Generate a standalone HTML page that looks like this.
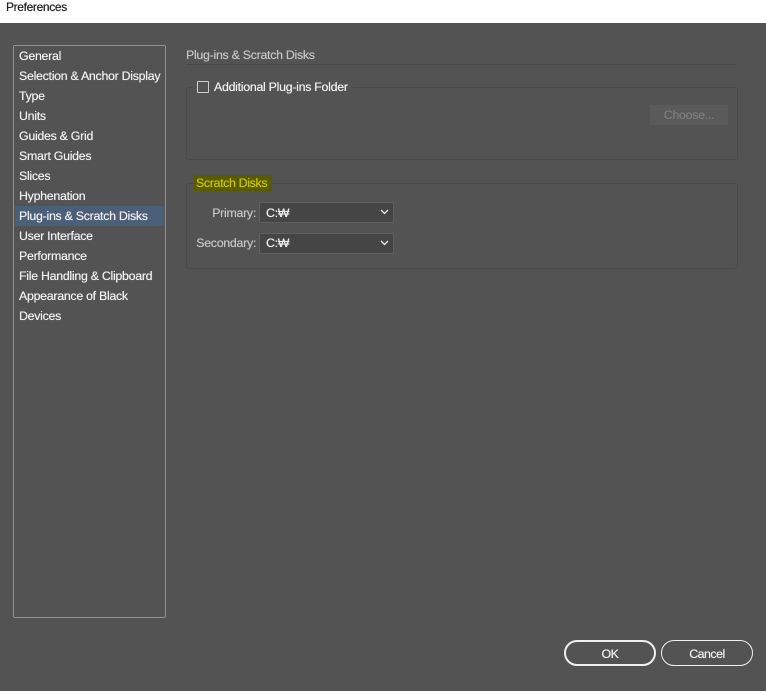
<!DOCTYPE html>
<html><head><meta charset="utf-8"><style>
html,body{margin:0;padding:0}
body{width:766px;height:691px;position:relative;overflow:hidden;background:#535353;font-family:"Liberation Sans","Noto Sans CJK KR",sans-serif;font-size:12.4px;letter-spacing:-.29px;color:#f0f0f0}
.a{position:absolute;white-space:nowrap;line-height:20px;text-shadow:0 0 .5px currentColor}
.title{left:0;top:0;width:766px;height:23px;background:#fff;position:absolute}
.list{position:absolute;left:13px;top:45px;width:151px;height:571px;border:1px solid #559fe6;border-radius:2px}
.sel{position:absolute;left:15px;top:206px;width:149px;height:20px;background:#4b6078}
.grp{position:absolute;border:1px solid #4a4a4a;border-radius:3px}
.dd{position:absolute;left:259px;width:133px;height:19px;background:#454545;border:1px solid #5f5f5f;border-radius:2px}
.btn{position:absolute;box-sizing:border-box;border-radius:13px;border:1px solid #f0f0f0;text-align:center;color:#f0f0f0;height:26px;line-height:26px;letter-spacing:-.5px;text-shadow:0 0 .5px currentColor}
</style></head><body>
<div class="title"></div>
<div class="a" style="left:6px;top:-3px;color:#222;font-size:12px;letter-spacing:-.35px">Preferences</div>
<div class="list"></div>
<div class="sel"></div>
<div class="a" style="left:19px;top:46px">General</div>
<div class="a" style="left:19px;top:66px">Selection &amp; Anchor Display</div>
<div class="a" style="left:19px;top:86px">Type</div>
<div class="a" style="left:19px;top:106px">Units</div>
<div class="a" style="left:19px;top:126px">Guides &amp; Grid</div>
<div class="a" style="left:19px;top:146px">Smart Guides</div>
<div class="a" style="left:19px;top:166px">Slices</div>
<div class="a" style="left:19px;top:186px">Hyphenation</div>
<div class="a" style="left:19px;top:206px">Plug-ins &amp; Scratch Disks</div>
<div class="a" style="left:19px;top:226px">User Interface</div>
<div class="a" style="left:19px;top:246px">Performance</div>
<div class="a" style="left:19px;top:266px">File Handling &amp; Clipboard</div>
<div class="a" style="left:19px;top:286px">Appearance of Black</div>
<div class="a" style="left:19px;top:306px">Devices</div>

<div class="a" style="left:186px;top:45px;color:#c4c4c4">Plug-ins &amp; Scratch Disks</div>
<div style="position:absolute;left:186px;top:64px;width:551px;height:1px;background:#494949"></div>

<div class="grp" style="left:186px;top:87px;width:550px;height:71px"></div>
<div style="position:absolute;left:193px;top:78px;width:160px;height:20px;background:#535353"></div>
<div style="position:absolute;left:197px;top:81px;width:10px;height:10px;border:1px solid #cfcfcf;border-radius:1px"></div>
<div class="a" style="left:214px;top:77px">Additional Plug-ins Folder</div>
<div style="position:absolute;left:650px;top:105px;width:78px;height:20px;background:#5a5a5a;border-radius:1px"></div>
<div class="a" style="left:650px;top:105px;width:78px;text-align:center;color:#7d7d7d">Choose...</div>

<div class="grp" style="left:186px;top:183px;width:550px;height:84px"></div>
<div style="position:absolute;left:194px;top:175px;width:78px;height:16px;background:#5a5a00"></div>
<div class="a" style="left:196px;top:173px;color:#c8c800;letter-spacing:-.35px">Scratch Disks</div>

<div class="a" style="left:156px;width:100px;text-align:right;top:203px;color:#c4c4c4">Primary:</div>
<div class="dd" style="top:202px"></div>
<div class="a" style="left:266px;top:203px">C:₩</div>
<svg style="position:absolute;left:380px;top:209px" width="9" height="6"><path d="M1 1L4.5 4.5L8 1" fill="none" stroke="#f0f0f0" stroke-width="1.3"/></svg>

<div class="a" style="left:156px;width:100px;text-align:right;top:233px;color:#c4c4c4">Secondary:</div>
<div class="dd" style="top:233px"></div>
<div class="a" style="left:266px;top:233px">C:₩</div>
<svg style="position:absolute;left:380px;top:240px" width="9" height="6"><path d="M1 1L4.5 4.5L8 1" fill="none" stroke="#f0f0f0" stroke-width="1.3"/></svg>

<div class="btn" style="left:564px;top:640px;width:92px;border-width:2px;line-height:25px">OK</div>
<div class="btn" style="left:661px;top:640px;width:92px">Cancel</div>
</body></html>
